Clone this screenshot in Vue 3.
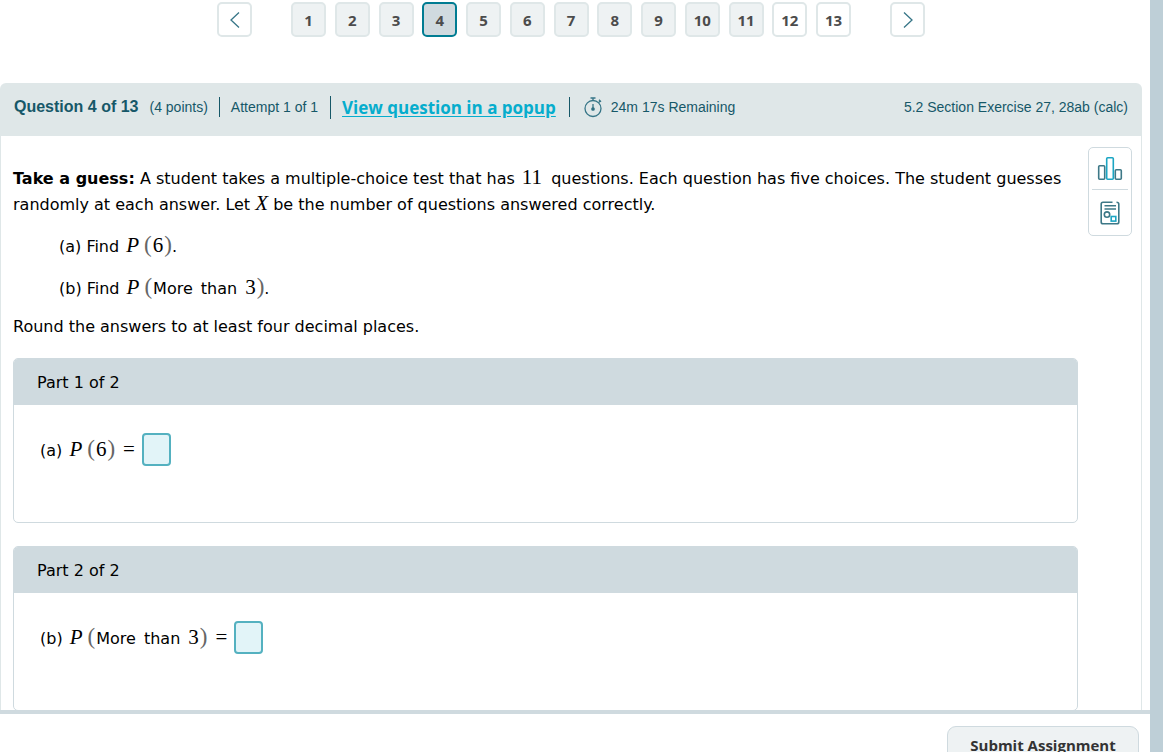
<script setup>
import { ref } from 'vue'

const questions = Array.from({ length: 13 }, (_, i) => i + 1)
const current = ref(4)
const answerA = ref('')
const answerB = ref('')
</script>

<template>
  <div class="page">
    <div class="scroll">
      <nav class="pager" aria-label="Questions">
        <button class="page-btn open" aria-label="Previous question">
          <svg width="12" height="18" viewBox="0 0 12 18"><path d="M10 1.5 2 9l8 7.5" /></svg>
        </button>
        <div class="numbers">
          <button
            v-for="n in questions"
            :key="n"
            class="page-btn"
            :class="{ active: n === current, open: n > 11 }"
            @click="current = n"
          >{{ n }}</button>
        </div>
        <button class="page-btn open" aria-label="Next question">
          <svg width="12" height="18" viewBox="0 0 12 18"><path d="M2 1.5 10 9l-8 7.5" /></svg>
        </button>
      </nav>

      <main class="panel">
        <header class="bar">
          <h1>Question 4 of 13</h1>
          <span class="points">(4 points)</span>
          <span class="rule"></span>
          <span>Attempt 1 of 1</span>
          <span class="rule tall"></span>
          <a href="#">View question in a popup</a>
          <span class="rule wide"></span>
          <svg class="clock" width="19" height="21" viewBox="0 0 19 21">
            <circle cx="9" cy="11.5" r="8" />
            <path d="M6.5 1h5M9 1v2.5M14.6 5.6l1.6-1.6M15 2.8l2 2M9 7v4" />
            <circle class="dot" cx="9" cy="12" r="1.2" />
          </svg>
          <span>24m 17s Remaining</span>
          <span class="source">5.2 Section Exercise 27, 28ab (calc)</span>
        </header>

        <div class="content">
          <div class="question">
            <p class="intro">
              <b>Take a guess:</b> A student takes a multiple-choice test that has
              <span class="m num">11</span> questions. Each question has five choices. The student guesses
              randomly at each answer. Let <i class="m">X</i> be the number of questions answered correctly.
            </p>
            <p class="item">(a) Find <i class="m fn">P</i><span class="m paren left">(</span><span class="m">6</span><span class="m paren">)</span>.</p>
            <p class="item">(b) Find <i class="m fn">P</i><span class="m paren left">(</span><span class="words"><span>More</span><span>than</span></span><span class="m after">3</span><span class="m paren">)</span>.</p>
            <p class="round">Round the answers to at least four decimal places.</p>

            <section class="part">
              <h2>Part 1 of 2</h2>
              <div class="part-body">
                <label for="answer-a">(a) <i class="m fn">P</i><span class="m paren left">(</span><span class="m">6</span><span class="m paren">)</span><span class="m eq">=</span></label>
                <input id="answer-a" v-model="answerA" type="text" />
              </div>
            </section>

            <section class="part">
              <h2>Part 2 of 2</h2>
              <div class="part-body">
                <label for="answer-b">(b) <i class="m fn">P</i><span class="m paren left">(</span><span class="words"><span>More</span><span>than</span></span><span class="m after">3</span><span class="m paren">)</span><span class="m eq">=</span></label>
                <input id="answer-b" v-model="answerB" type="text" />
              </div>
            </section>
          </div>

          <aside class="tools">
            <button aria-label="Data tools">
              <svg width="26" height="26" viewBox="0 0 26 26">
                <rect x="1.7" y="9.7" width="6" height="13.6" rx="1" />
                <rect class="accent" x="9.7" y="1.7" width="6.6" height="21.6" rx="1" />
                <rect x="18.3" y="13.7" width="6" height="9.6" rx="1" />
              </svg>
            </button>
            <button aria-label="Formula sheet">
              <svg width="20" height="24" viewBox="0 0 20 24">
                <path d="M12.5 1.2H3Q1.2 1.2 1.2 3V21Q1.2 22.8 3 22.8H17Q18.8 22.8 18.8 21V3Q18.8 1.2 16.5 1.2" />
                <path d="M4.5 4.7h11.5M4.5 8h11.5" />
                <circle cx="7" cy="13.6" r="2.7" />
                <rect class="accent" x="11.2" y="15.5" width="4.6" height="4.6" />
              </svg>
            </button>
          </aside>
        </div>
      </main>
    </div>

    <footer>
      <button class="submit">Submit Assignment</button>
    </footer>
  </div>
</template>

<style>
body {
  margin: 0;
  background: #fff;
}
</style>

<style scoped>
.page {
  box-sizing: border-box;
  height: 100vh;
  display: flex;
  flex-direction: column;
  overflow: hidden;
  border-right: 13px solid #becfd7;
  font-family: "DejaVu Sans", Verdana, sans-serif;
  font-size: 16px;
  color: #000;
}
button {
  font: inherit;
  cursor: pointer;
}
.scroll {
  flex: 1;
  min-height: 0;
  overflow: hidden;
  padding: 2px 8px 0 0;
}
.pager {
  display: flex;
  justify-content: center;
  gap: 39px;
}
.numbers {
  display: flex;
  justify-content: space-between;
  width: 560px;
}
.page-btn {
  box-sizing: border-box;
  width: 35px;
  height: 35px;
  padding: 0;
  display: flex;
  align-items: center;
  justify-content: center;
  border: 2px solid #dfe7e8;
  border-radius: 5px;
  background: #eef2f3;
  color: #4c4c4c;
  font: bold 15px "Open Sans", sans-serif;
}
.page-btn.open {
  background: #fff;
}
.page-btn.active {
  background: #d0dadf;
  border-color: #007c92;
}
.page-btn svg {
  fill: none;
  stroke: #367587;
  stroke-width: 1.3;
}
.panel {
  margin-top: 46px;
}
.bar {
  box-sizing: border-box;
  height: 53px;
  padding: 0 14px 5px;
  display: flex;
  align-items: center;
  border-radius: 6px 6px 0 0;
  background: #dfe7e8;
  color: #165868;
  font-family: "Liberation Sans", Arial, sans-serif;
  font-size: 14px;
  white-space: nowrap;
}
.bar h1 {
  margin: 0 11px 0 0;
  font-size: 16px;
}
.rule {
  width: 1px;
  height: 20px;
  margin: 0 11px;
  background: #165868;
}
.rule.tall {
  height: 23px;
  margin: 0 11px 0 12px;
}
.rule.wide {
  margin: 0 11px 0 13px;
}
.bar a {
  color: #06adcd;
  font: bold 17px "Open Sans", sans-serif;
  text-underline-offset: 2px;
}
.clock {
  margin: 0 8px 0 3px;
  fill: none;
  stroke: #367587;
  stroke-width: 1.3;
}
.clock .dot {
  fill: #165868;
}
.source {
  margin-left: auto;
}
.content {
  display: flex;
  align-items: flex-start;
  gap: 10px;
  padding: 11px 9px 24px 12px;
  border: 1px solid #dfe7e8;
  border-top: 0;
}
.question {
  flex: 1;
  min-width: 0;
}
p {
  margin: 0;
}
.intro {
  margin-top: 19px;
  line-height: 26px;
}
.m {
  font-family: "Liberation Serif", "Times New Roman", serif;
  font-size: 21px;
  line-height: 20px;
}
.num {
  margin: 0 4px 0 2px;
}
.fn {
  margin-left: 2px;
}
.paren {
  margin-left: 1px;
  color: #666;
  font-size: 23px;
}
.paren.left {
  margin: 0 1px 0 5px;
}
.words {
  display: inline-flex;
  gap: 8px;
}
.after {
  margin-left: 8px;
}
.eq {
  margin-left: 8px;
}
.item {
  margin: 16px 0 0 46px;
  line-height: 26px;
}
.round {
  margin-top: 12px;
  line-height: 26px;
}
.part {
  margin-top: 18px;
  border: 1px solid #cfdadf;
  border-radius: 5px;
  overflow: hidden;
}
.part + .part {
  margin-top: 23px;
}
.part h2 {
  margin: 0;
  padding: 11px 23px 9px;
  background: #cfdadf;
  font-size: 16px;
  font-weight: normal;
  line-height: 26px;
}
.part-body {
  display: flex;
  align-items: center;
  gap: 7px;
  padding: 28px 26px 56px;
}
.part-body input {
  box-sizing: border-box;
  width: 29px;
  height: 33px;
  padding: 2px;
  border: 2px solid #54b1c0;
  border-radius: 4px;
  background: #e2f4f8;
  font: inherit;
}
.tools {
  box-sizing: border-box;
  width: 44px;
  padding: 0 3px;
  border: 1px solid #cfdadf;
  border-radius: 5px;
}
.tools button {
  width: 100%;
  height: 41px;
  padding: 0;
  display: flex;
  align-items: center;
  justify-content: center;
  border: 0;
  background: none;
}
.tools button + button {
  height: 46px;
  border-top: 1px solid #cfdadf;
}
.tools svg {
  fill: none;
  stroke: #3d7887;
  stroke-width: 1.6;
}
.tools .accent {
  stroke: #1ba5c3;
}
footer {
  box-sizing: border-box;
  height: 42px;
  padding: 12px 11px 0;
  display: flex;
  justify-content: flex-end;
  border-top: 4px solid #cfdadf;
}
.submit {
  box-sizing: border-box;
  flex: none;
  width: 192px;
  height: 38px;
  padding: 0;
  border: 1px solid #cfdadf;
  border-radius: 9px;
  background: #eef2f3;
  color: #333;
  font: bold 15px "Open Sans", sans-serif;
}
</style>
